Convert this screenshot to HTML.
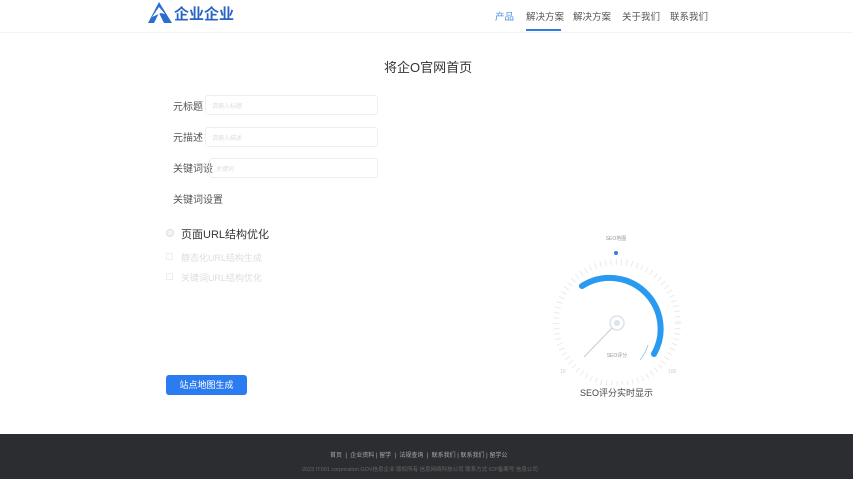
<!DOCTYPE html>
<html><head><meta charset="utf-8"><style>
*{margin:0;padding:0;box-sizing:border-box}
body{width:853px;height:479px;overflow:hidden;background:#fff;font-family:"Liberation Sans","Noto Sans CJK SC",sans-serif;position:relative;color:#333}
.abs{position:absolute}
.nav{font-size:9.5px;color:#555;top:9px}
.lbl{font-size:10px;color:#555}
.inp{border:1px solid #eee;border-radius:3px;height:20px;font-size:6px;color:#ddd;padding:5px 6px}
.foot{left:0;top:434px;width:853px;height:45px;background:#2c2d31}
</style></head><body>
<svg class="abs" style="left:147px;top:1px" width="26" height="24" viewBox="0 0 26 24"><path d="M12 1 L1 22 L7 22 L12 12 L17 22 L25 22 Z" fill="#2a6fcf"/><path d="M5 16 L12 6 L18 13 L14 12 Z" fill="#fff"/></svg>
<div class="abs" style="left:174px;top:3px;font-size:15px;font-weight:bold;color:#2a63c4">企业企业</div>
<div class="abs nav" style="left:495px;color:#4a90e2">产品</div>
<div class="abs nav" style="left:526px">解决方案</div>
<div class="abs nav" style="left:573px">解决方案</div>
<div class="abs nav" style="left:622px">关于我们</div>
<div class="abs nav" style="left:670px">联系我们</div>
<div class="abs" style="left:526px;top:29px;width:35px;height:2px;background:#2f7de1"></div>
<div class="abs" style="left:0;top:32px;width:853px;height:1px;background:#f4f4f4"></div>
<div class="abs" style="left:384px;top:57px;font-size:13px;color:#333">将企O官网首页</div>
<div class="abs lbl" style="left:173px;top:98px">元标题</div>
<div class="abs inp" style="left:205px;top:95px;width:173px">请输入标题</div>
<div class="abs lbl" style="left:173px;top:129px">元描述</div>
<div class="abs inp" style="left:205px;top:127px;width:173px">请输入描述</div>
<div class="abs lbl" style="left:173px;top:160px">关键词设</div>
<div class="abs inp" style="left:209px;top:158px;width:169px">关键词</div>
<div class="abs lbl" style="left:173px;top:191px">关键词设置</div>
<div class="abs" style="left:166px;top:229px;width:8px;height:8px;border-radius:50%;border:1px solid #ddd;background:#f4f4f4"></div>
<div class="abs" style="left:181px;top:226px;font-size:11px;color:#333">页面URL结构优化</div>
<div class="abs" style="left:166px;top:253px;width:7px;height:7px;border:1px solid #eee"></div>
<div class="abs" style="left:181px;top:251px;font-size:9px;color:#ddd">静态化URL结构生成</div>
<div class="abs" style="left:166px;top:273px;width:7px;height:7px;border:1px solid #eee"></div>
<div class="abs" style="left:181px;top:271px;font-size:9px;color:#ddd">关键词URL结构优化</div>
<div class="abs" style="left:166px;top:375px;width:81px;height:20px;background:#2b7cf0;border-radius:3px;color:#fff;font-size:9px;text-align:center;line-height:20px">站点地图生成</div>
<svg class="abs" style="left:530px;top:225px" width="170" height="160" viewBox="530 225 170 160">
<text x="616" y="240" font-size="5" fill="#999" text-anchor="middle">SEO地图</text>
<circle cx="616" cy="253" r="2" fill="#2f7de1"/>
<circle cx="617" cy="323" r="61" fill="none" stroke="#e6e6e6" stroke-width="6" stroke-dasharray="0.8 4.5"/>
<path d="M582 286 A51 51 0 0 1 654 354" fill="none" stroke="#2a9af0" stroke-width="6" stroke-linecap="round"/>
<path d="M640 360 A44 44 0 0 0 648 345" fill="none" stroke="#9ccff5" stroke-width="1"/>
<circle cx="617" cy="323" r="7" fill="none" stroke="#dde3ec" stroke-width="1.5"/>
<circle cx="617" cy="323" r="3" fill="#dde3ec"/>
<line x1="612" y1="328" x2="584" y2="357" stroke="#c8ccd6" stroke-width="1"/>
<text x="617" y="357" font-size="5" fill="#999" text-anchor="middle">SEO评分</text>
<text x="560" y="373" font-size="5" fill="#ccc">10</text>
<text x="668" y="373" font-size="5" fill="#ccc">100</text>
</svg>
<div class="abs" style="left:580px;top:386px;font-size:9px;color:#444">SEO评分实时显示</div>
<div class="abs foot"></div>
<div class="abs" style="left:330px;top:450px;font-size:6px;color:#aaa;white-space:nowrap">首页 &nbsp;| &nbsp;企业资料 | 留学 &nbsp;| &nbsp;法规查询 &nbsp;| &nbsp;联系我们 | 联系我们 | 留学公</div>
<div class="abs" style="left:302px;top:465px;font-size:5.5px;color:#666;white-space:nowrap">2023 IT001 corporation GOV信息企业 版权所有 信息网络科技公司 联系方式 ICP备案号 信息公司</div>
</body></html>
